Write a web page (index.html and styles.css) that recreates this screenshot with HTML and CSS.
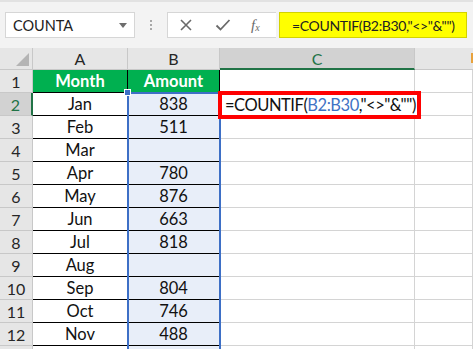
FILE: index.html
```html
<!DOCTYPE html>
<html>
<head>
<meta charset="utf-8">
<link rel="stylesheet" href="styles.css">
</head>
<body>
<div class="app">
  <div class="toolbar">
    <div class="namebox"><span class="nb-text">COUNTA</span><span class="caret"></span></div>
    <div class="dots"><i></i><i></i><i></i></div>
    <div class="fbtns">
      <svg class="ic" width="14" height="14" viewBox="0 0 14 14"><path d="M2 2 L12 12 M12 2 L2 12" stroke="#6a6a6a" stroke-width="1.6" fill="none"/></svg>
      <svg class="ic ic-check" width="16" height="14" viewBox="0 0 16 14"><path d="M1.5 7.5 L5.5 11.5 L14.5 2" stroke="#6a6a6a" stroke-width="1.8" fill="none"/></svg>
      <span class="fx">f<sub>x</sub></span>
    </div>
    <div class="formula">=COUNTIF(B2:B30,"&lt;&gt;"&amp;"")</div>
  </div>
  <div class="sheet">
    <div class="corner"><span class="tri"></span></div>
    <div class="ch">A</div>
    <div class="ch">B</div>
    <div class="ch ch-sel">C</div>
    <div class="ch ch-d"><span class="dmark"></span></div>

    <div class="rh">1</div><div class="cell hdr">Month</div><div class="cell hdr">Amount</div><div class="cell"></div><div class="cell"></div>
    <div class="rh rh-sel">2</div><div class="cell t">Jan</div><div class="cell t b">838</div><div class="cell"></div><div class="cell"></div>
    <div class="rh">3</div><div class="cell t">Feb</div><div class="cell t b">511</div><div class="cell"></div><div class="cell"></div>
    <div class="rh">4</div><div class="cell t">Mar</div><div class="cell t b"></div><div class="cell"></div><div class="cell"></div>
    <div class="rh">5</div><div class="cell t">Apr</div><div class="cell t b">780</div><div class="cell"></div><div class="cell"></div>
    <div class="rh">6</div><div class="cell t">May</div><div class="cell t b">876</div><div class="cell"></div><div class="cell"></div>
    <div class="rh">7</div><div class="cell t">Jun</div><div class="cell t b">663</div><div class="cell"></div><div class="cell"></div>
    <div class="rh">8</div><div class="cell t">Jul</div><div class="cell t b">818</div><div class="cell"></div><div class="cell"></div>
    <div class="rh">9</div><div class="cell t">Aug</div><div class="cell t b"></div><div class="cell"></div><div class="cell"></div>
    <div class="rh">10</div><div class="cell t">Sep</div><div class="cell t b">804</div><div class="cell"></div><div class="cell"></div>
    <div class="rh">11</div><div class="cell t">Oct</div><div class="cell t b">746</div><div class="cell"></div><div class="cell"></div>
    <div class="rh">12</div><div class="cell t">Nov</div><div class="cell t b">488</div><div class="cell"></div><div class="cell"></div>
    <div class="rh"></div><div class="cell t"></div><div class="cell t b"></div><div class="cell"></div><div class="cell"></div>
  </div>
  <div class="selection"></div>
  <div class="handle"></div>
  <div class="editbox"><span class="eq">=COUNTIF(</span><span class="ref">B2:B30</span><span class="eq">,"&lt;&gt;"&amp;"")</span><span class="cursor"></span></div>
</div>
</body>
</html>
```

FILE: styles.css
```css
* { box-sizing: border-box; }
html, body { margin: 0; padding: 0; }
body {
  width: 473px;
  height: 349px;
  overflow: hidden;
  background: #ffffff;
  font-family: "Lato", "Open Sans", sans-serif;
}
.app {
  position: relative;
  width: 473px;
  height: 349px;
  overflow: hidden;
}
.toolbar {
  height: 48px;
  background: #f3f3f3;
  border-top: 2px solid #e2e2e2;
  display: flex;
  align-items: flex-start;
  padding-top: 10px;
  padding-left: 5px;
}
.namebox {
  width: 130px;
  height: 26px;
  background: #fff;
  border: 1px solid #d6d6d6;
  display: flex;
  align-items: center;
  justify-content: space-between;
  padding: 0 7px 0 7px;
}
.nb-text {
  font-family: "Lato", sans-serif;
  font-size: 14.5px;
  color: #222;
}
.caret {
  width: 0;
  height: 0;
  border-left: 4px solid transparent;
  border-right: 4px solid transparent;
  border-top: 5px solid #6d6d6d;
}
.dots {
  width: 32px;
  height: 26px;
  display: flex;
  flex-direction: column;
  align-items: center;
  justify-content: center;
  gap: 2px;
}
.dots i {
  display: block;
  width: 2px;
  height: 2px;
  background: #a8a8a8;
}
.fbtns {
  width: 109px;
  height: 26px;
  background: #fff;
  border: 1px solid #d6d6d6;
  border-right: none;
  display: flex;
  align-items: center;
  padding-left: 11px;
}
.ic { display: block; }
.ic-check { margin-left: 22px; }
.fx {
  margin-left: 20px;
  font-family: "Liberation Serif", serif;
  font-style: italic;
  font-size: 15px;
  color: #6a6a6a;
  line-height: 1;
}
.fx sub { font-size: 10px; vertical-align: baseline; position: relative; top: 1px; }
.formula {
  margin-left: 3px;
  width: 188px;
  height: 26px;
  background: #ffff00;
  border: 1px solid #d2d200;
  font-family: "Lato", sans-serif;
  font-size: 14px;
  letter-spacing: -0.35px;
  color: #222;
  display: flex;
  align-items: center;
  padding-left: 12px;
  white-space: nowrap;
}

.sheet {
  display: grid;
  grid-template-columns: 33px 95px 92px 195px 58px;
  grid-template-rows: 22px repeat(13, 23px);
  font-family: "Lato", sans-serif;
}
.corner {
  background: #e6e6e6;
  border-right: 1px solid #c8c8c8;
  border-bottom: 1px solid #c8c8c8;
  position: relative;
}
.tri {
  position: absolute;
  right: 3px;
  bottom: 3px;
  width: 0;
  height: 0;
  border-left: 13px solid transparent;
  border-bottom: 13px solid #b4b4b4;
}
.ch {
  background: #e6e6e6;
  border-right: 1px solid #c8c8c8;
  border-bottom: 1px solid #c8c8c8;
  display: flex;
  align-items: center;
  justify-content: center;
  font-size: 16px;
  color: #262626;
}
.ch-sel {
  background: #d2d2d2;
  border-bottom: 2px solid #217346;
  color: #217346;
}
.ch-d { position: relative; border-right: none; }
.dmark {
  position: absolute;
  right: 0;
  top: 5px;
  width: 2px;
  height: 10px;
  background: #e8a23c;
}
.rh {
  background: #e6e6e6;
  border-right: 1px solid #c8c8c8;
  border-bottom: 1px solid #c8c8c8;
  display: flex;
  align-items: center;
  justify-content: center;
  font-size: 16px;
  color: #262626;
}
.rh-sel {
  background: #d2d2d2;
  border-right: 2px solid #217346;
  color: #217346;
}
.cell {
  border-right: 1px solid #d4d4d4;
  border-bottom: 1px solid #d4d4d4;
  display: flex;
  align-items: center;
  justify-content: center;
  font-size: 16.5px;
  color: #111;
  white-space: nowrap;
}
.cell.hdr {
  background: #00b050;
  color: #ffffff;
  font-weight: 700;
  border-right: 1px solid #000;
  border-bottom: 1px solid #000;
}
.cell.t {
  border-right: 1px solid #000;
  border-bottom: 1px solid #000;
}
.cell.b { background: #e8eef9; }

.selection {
  position: absolute;
  left: 127px;
  top: 92px;
  width: 94px;
  height: 270px;
  border: 2px solid #3d6fc6;
  border-bottom: none;
}
.handle {
  position: absolute;
  left: 124px;
  top: 89px;
  width: 7px;
  height: 7px;
  background: #3d6fc6;
  border: 1px solid #fff;
}
.editbox {
  position: absolute;
  left: 218px;
  top: 91px;
  width: 203px;
  height: 28px;
  border: 4px solid #ff0000;
  background: #fff;
  display: flex;
  align-items: center;
  padding-left: 3px;
  font-family: "Lato", sans-serif;
  font-size: 16.5px;
  letter-spacing: -0.45px;
  color: #111;
  white-space: nowrap;
}
.ref { color: #3f72c4; }
.cursor {
  display: inline-block;
  width: 1px;
  height: 15px;
  background: #000;
  margin-left: 3px;
}
```
